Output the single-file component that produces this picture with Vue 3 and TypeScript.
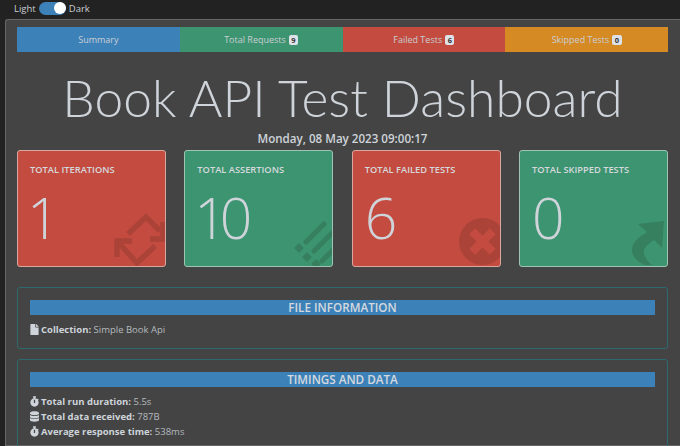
<script setup lang="ts">
interface Tab { label: string; count?: number; tone: string }
interface Stat { title: string; value: number; tone: string; icon: string }
interface Row { label: string; value: string; icon: string }

const tabs: Tab[] = [
  { label: 'Summary', tone: 'blue' },
  { label: 'Total Requests', count: 9, tone: 'green' },
  { label: 'Failed Tests', count: 6, tone: 'red' },
  { label: 'Skipped Tests', count: 0, tone: 'orange' },
]
const stats: Stat[] = [
  { title: 'TOTAL ITERATIONS', value: 1, tone: 'red', icon: 'retweet' },
  { title: 'TOTAL ASSERTIONS', value: 10, tone: 'green', icon: 'tasks' },
  { title: 'TOTAL FAILED TESTS', value: 6, tone: 'red', icon: 'times' },
  { title: 'TOTAL SKIPPED TESTS', value: 0, tone: 'green', icon: 'share' },
]
const timings: Row[] = [
  { label: 'Total run duration:', value: '5.5s', icon: 'stopwatch' },
  { label: 'Total data received:', value: '787B', icon: 'database' },
  { label: 'Average response time:', value: '538ms', icon: 'stopwatch' },
]
const startsWithOne = (n: number): boolean => String(n).startsWith('1')
</script>

<template>
  <div class="page">
    <div class="topbar">
      <span>Light</span>
      <span class="switch"><span class="knob"></span></span>
      <span>Dark</span>
    </div>
    <main class="panel">
      <nav class="tabs">
        <a v-for="t in tabs" :key="t.label" class="tab" :class="t.tone">
          {{ t.label }}<span v-if="t.count !== undefined" class="badge">{{ t.count }}</span>
        </a>
      </nav>
      <h1 class="title">Book API Test Dashboard</h1>
      <h5 class="date">Monday, 08 May 2023 09:00:17</h5>
      <div class="cards">
        <div v-for="s in stats" :key="s.title" class="card" :class="s.tone">
          <div class="card-title">{{ s.title }}</div>
          <div class="card-value" :class="{ 'lead-one': startsWithOne(s.value) }">{{ s.value }}</div>
          <svg v-if="s.icon === 'retweet'" class="wm wm-retweet" viewBox="0 0 55 53">
            <g fill="none" stroke="currentColor" stroke-width="5.5">
              <path d="M18 21 36 4 50 18M40 26H53V9" />
              <path d="M7 44V28H22M8 29 27 50 45 33" />
            </g>
          </svg>
          <svg v-else-if="s.icon === 'tasks'" class="wm wm-tasks" viewBox="0 0 50 50">
            <g stroke="currentColor" stroke-width="5" stroke-linecap="round" fill="none">
              <path d="M24 26 42 8M32 35 50 17M40 45 50 35" />
            </g>
            <g fill="currentColor">
              <rect x="13.500" y="28.500" width="7" height="7" rx="1" transform="rotate(45 17 32)" />
              <rect x="21.500" y="37.500" width="7" height="7" rx="1" transform="rotate(45 25 41)" />
              <rect x="30.500" y="44.500" width="7" height="7" rx="1" transform="rotate(45 34 48)" />
            </g>
          </svg>
          <svg v-else-if="s.icon === 'times'" class="wm wm-times" viewBox="0 0 48 48">
            <path fill="currentColor" fill-rule="evenodd" d="M24 0a24 24 0 1 0 0 48 24 24 0 0 0 0-48ZM16.500 10.500 24 18l7.500-7.500 6 6L30 24l7.500 7.500-6 6L24 30l-7.500 7.500-6-6L18 24l-7.500-7.500Z" />
          </svg>
          <svg v-else class="wm wm-share" viewBox="0 0 35 46">
            <path fill="currentColor" d="M7 4 33 1 31 28 23 20C17 24 12 28 13 33 14 38 17 42 21 45H14C6 42 1 36 1 30 1 22 8 17 16 12Z" />
          </svg>
        </div>
      </div>

      <section class="box first">
        <h5 class="box-head">FILE INFORMATION</h5>
        <div class="row">
          <svg class="ico" viewBox="0 0 384 512">
            <path fill="currentColor" d="M224 136V0H24C11 0 0 11 0 24v464c0 13 11 24 24 24h336c13 0 24-11 24-24V160H248c-13 0-24-11-24-24Zm160-14v6H256V0h6c6 0 12 3 17 7l98 98c4 5 7 11 7 17Z" />
          </svg>
          <b>Collection:</b> Simple Book Api
        </div>
      </section>

      <section class="box">
        <h5 class="box-head">TIMINGS AND DATA</h5>
        <div v-for="r in timings" :key="r.label" class="row">
          <svg v-if="r.icon === 'stopwatch'" class="ico" viewBox="0 0 448 512">
            <path fill="currentColor" d="M432 304c0 114-94 208-208 208S16 418 16 304c0-104 77-190 176-205V64h-28c-7 0-12-5-12-12V12c0-7 5-12 12-12h120c7 0 12 5 12 12v40c0 7-5 12-12 12h-28v35c38 6 72 22 100 45l27-27c5-5 12-5 17 0l28 28c5 5 5 12 0 17l-29 30c19 32 29 69 29 112ZM256 180c0-7-5-12-12-12h-40c-7 0-12 5-12 12v136c0 7 5 12 12 12h40c7 0 12-5 12-12Z" />
          </svg>
          <svg v-else class="ico" viewBox="0 0 448 512">
            <path fill="currentColor" d="M448 73v46c0 40-100 73-224 73S0 159 0 119V73C0 33 100 0 224 0s224 33 224 73Zm0 103v103c0 40-100 73-224 73S0 319 0 279V176c48 33 136 49 224 49s176-16 224-49Zm0 160v103c0 40-100 73-224 73S0 479 0 439V336c48 33 136 49 224 49s176-16 224-49Z" />
          </svg>
          <b>{{ r.label }}</b> {{ r.value }}
        </div>
      </section>
    </main>
  </div>
</template>

<style>
html, body { margin: 0; background: #222; overflow: hidden; }
</style>

<style scoped>
.page {
  width: 680px;
  height: 446px;
  overflow: hidden;
  background: #222;
  color: #ced4da;
  font-family: "Open Sans", "Noto Sans", sans-serif;
  font-size: 9.5px;
}
.topbar {
  height: 19px;
  box-sizing: border-box;
  padding-left: 14px;
  display: flex;
  align-items: center;
  gap: 3px;
  padding-bottom: 3px;
  color: #c9ced3;
}
.switch {
  width: 27px;
  height: 13px;
  border-radius: 7px;
  background: #3d81b9;
  display: flex;
  justify-content: flex-end;
  align-items: center;
}
.knob {
  width: 12px;
  height: 12px;
  border-radius: 50%;
  background: #fff;
}
.panel {
  margin-left: 5px;
  padding: 7px 12px 0 11px;
  height: 427px;
  box-sizing: border-box;
  background: #444;
  border: 1px solid #666;
  border-right: 0;
  border-radius: 3px 0 0 0;
}
.tabs {
  display: grid;
  grid-template-columns: repeat(4, 1fr);
  height: 25px;
}
.tab {
  display: flex;
  align-items: center;
  justify-content: center;
  gap: 3px;
  font-size: 9px;
  color: #c9ced3;
}
.blue { background: #3d81b9; }
.green { background: #3d9470; }
.red { background: #c44b3f; }
.orange { background: #d68a23; }
.badge {
  background: #dde2e8;
  color: #333;
  font-size: 7.5px;
  font-weight: 700;
  border-radius: 2px;
  padding: 1px 2.5px;
  line-height: 8px;
}
.title {
  margin: 12px 0 0;
  text-align: center;
  font-family: Lato, "Open Sans", sans-serif;
  font-size: 51.5px;
  line-height: 67px;
  font-weight: 300;
  color: #ced4da;
}
.date {
  margin: 0;
  text-align: center;
  font-size: 11.6px;
  line-height: 15px;
  font-weight: 600;
  color: #ced4da;
}
.cards {
  margin-top: 4px;
  display: grid;
  grid-template-columns: repeat(4, 149px);
  justify-content: space-between;
}
.card {
  position: relative;
  height: 117px;
  box-sizing: border-box;
  overflow: hidden;
  border: 1px solid #aaa;
  border-radius: 3px;
  padding: 12px;
}
.card.red { border-color: #d8a8a0; }
.card.green { border-color: #a0c4b4; }
.card-title {
  font-size: 9.3px;
  line-height: 13px;
  font-weight: 600;
  color: #d5d9dd;
}
.card-value {
  margin-top: 8px;
  font-size: 57px;
  line-height: 66px;
  font-weight: 300;
  color: #ced4da;
}
.card-value.lead-one {
  margin-left: -3px;
  letter-spacing: -7px;
}
.wm { position: absolute; }
.card.red .wm { color: #ab4338; }
.card.green .wm { color: #36805f; }
.wm-retweet { width: 55px; height: 53px; right: 0; bottom: 0; }
.wm-tasks { width: 50px; height: 50px; right: 0; bottom: 0; }
.wm-times { width: 47px; height: 47px; right: -6px; bottom: 1px; }
.wm-share { width: 35px; height: 46px; right: 1px; bottom: 0; }
.box {
  margin-top: 10px;
  padding: 12px 12px 10px;
  border: 1px solid #2d6a6e;
  border-radius: 3px;
}
.box.first { margin-top: 20px; height: 62px; box-sizing: border-box; }
.box-head {
  margin: 0 0 7px;
  background: #3d81b9;
  text-align: center;
  font-size: 11.7px;
  line-height: 15px;
  font-weight: 600;
  color: #d5d9dd;
}
.row {
  line-height: 15px;
  font-size: 9.5px;
  color: #b4babf;
  white-space: pre-wrap;
}
.row b { font-weight: 700; color: #ced4da; }
.ico {
  width: 9px;
  height: 11px;
  vertical-align: -2px;
  color: #ced4da;
  margin-right: 2px;
}
</style>
